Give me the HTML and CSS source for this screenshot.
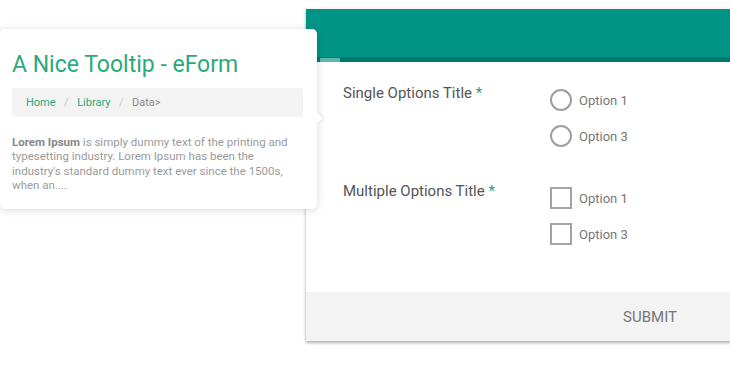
FILE: index.html
```html
<!DOCTYPE html>
<html>
<head>
<meta charset="utf-8">
<link rel="stylesheet" href="styles.css">
</head>
<body>
<div class="stage">
  <form class="card">
    <div class="card-head"><span class="head-tab"></span></div>
    <div class="card-body">
      <div class="field">
        <div class="field-label">Single Options Title <span class="req">*</span></div>
        <div class="options">
          <label class="opt"><span class="radio"></span>Option 1</label>
          <label class="opt"><span class="radio"></span>Option 3</label>
        </div>
      </div>
      <div class="field">
        <div class="field-label">Multiple Options Title <span class="req">*</span></div>
        <div class="options">
          <label class="opt"><span class="check"></span>Option 1</label>
          <label class="opt"><span class="check"></span>Option 3</label>
        </div>
      </div>
    </div>
    <div class="card-foot"><button type="button" class="submit">SUBMIT</button></div>
  </form>

  <div class="tooltip">
    <h1 class="tip-title">A Nice Tooltip - eForm</h1>
    <nav class="crumbs">
      <a class="crumb-link">Home</a><span class="sep">/</span><a class="crumb-link">Library</a><span class="sep">/</span><span class="crumb-cur">Data&gt;</span>
    </nav>
    <p class="tip-text"><b>Lorem Ipsum</b> is simply dummy text of the printing and typesetting industry. Lorem Ipsum has been the industry's standard dummy text ever since the 1500s, when an....</p>
    <span class="arrow"></span>
  </div>
</div>
</body>
</html>
```

FILE: styles.css
```css
html, body {
  margin: 0;
  padding: 0;
  background: #fff;
  overflow: hidden;
  font-family: Roboto, "Liberation Sans", sans-serif;
}

.stage {
  position: relative;
  width: 730px;
  height: 377px;
  padding-top: 9px;
  box-sizing: border-box;
}

.card {
  margin: 0 0 0 306px;
  width: 440px;
  background: #fff;
  box-shadow: 0 2px 3px rgba(0,0,0,0.28), 0 0 4px rgba(0,0,0,0.08);
}

.card-head {
  height: 48px;
  background: #009485;
  border-bottom: 5px solid #00796b;
  position: relative;
}

.head-tab {
  position: absolute;
  left: 14px;
  bottom: -5px;
  width: 20px;
  height: 4px;
  background: #5cb8ae;
}

.card-body {
  padding: 21px 0 0 37px;
  height: 230px;
  box-sizing: border-box;
}

.field {
  display: flex;
  margin-bottom: 34px;
}

.field-label {
  width: 207px;
  font-size: 15px;
  line-height: 20px;
  color: #555;
}

.req {
  color: #26a07e;
}

.options {
  margin-top: 6px;
  display: flex;
  flex-direction: column;
  gap: 14px;
}

.opt {
  display: flex;
  align-items: center;
  height: 22px;
  font-size: 13px;
  color: #777;
}

.radio {
  width: 22px;
  height: 22px;
  box-sizing: border-box;
  border: 2px solid #9e9e9e;
  border-radius: 50%;
  margin-right: 7px;
}

.check {
  width: 22px;
  height: 22px;
  box-sizing: border-box;
  border: 2px solid #a3a3a3;
  margin-right: 7px;
}

.card-foot {
  height: 49px;
  background: #f3f3f3;
  display: flex;
  align-items: center;
  justify-content: flex-end;
  padding-right: 69px;
}

.submit {
  border: 0;
  background: none;
  padding: 0;
  font-family: Roboto, "Liberation Sans", sans-serif;
  font-size: 15px;
  color: #777;
}

.tooltip {
  position: absolute;
  left: 0;
  top: 29px;
  width: 317px;
  height: 180px;
  box-sizing: border-box;
  padding: 22px 16px 0 12px;
  background: #fff;
  border-radius: 5px;
  box-shadow: 0 1px 9px rgba(0,0,0,0.16);
}

.tip-title {
  margin: 0;
  font-weight: 400;
  font-size: 23px;
  line-height: 28px;
  color: #2aa97a;
}

.crumbs {
  margin: 9px -2px 0 0;
  height: 29px;
  background: #f3f3f3;
  border-radius: 3px;
  display: flex;
  align-items: center;
  padding-left: 14px;
  font-size: 11px;
}

.crumb-link {
  color: #2aa97a;
}

.sep {
  color: #c8c8c8;
  padding: 0 8.5px;
}

.crumb-cur {
  color: #888;
}

.tip-text {
  margin: 18px 0 0 0;
  font-size: 11.5px;
  line-height: 14.4px;
  color: #9a9a9a;
}

.tip-text b {
  color: #888;
}

.arrow {
  position: absolute;
  right: -4px;
  top: 85px;
  width: 8px;
  height: 8px;
  background: #fff;
  transform: rotate(45deg);
  box-shadow: 2px -2px 3px rgba(0,0,0,0.06);
}
```
